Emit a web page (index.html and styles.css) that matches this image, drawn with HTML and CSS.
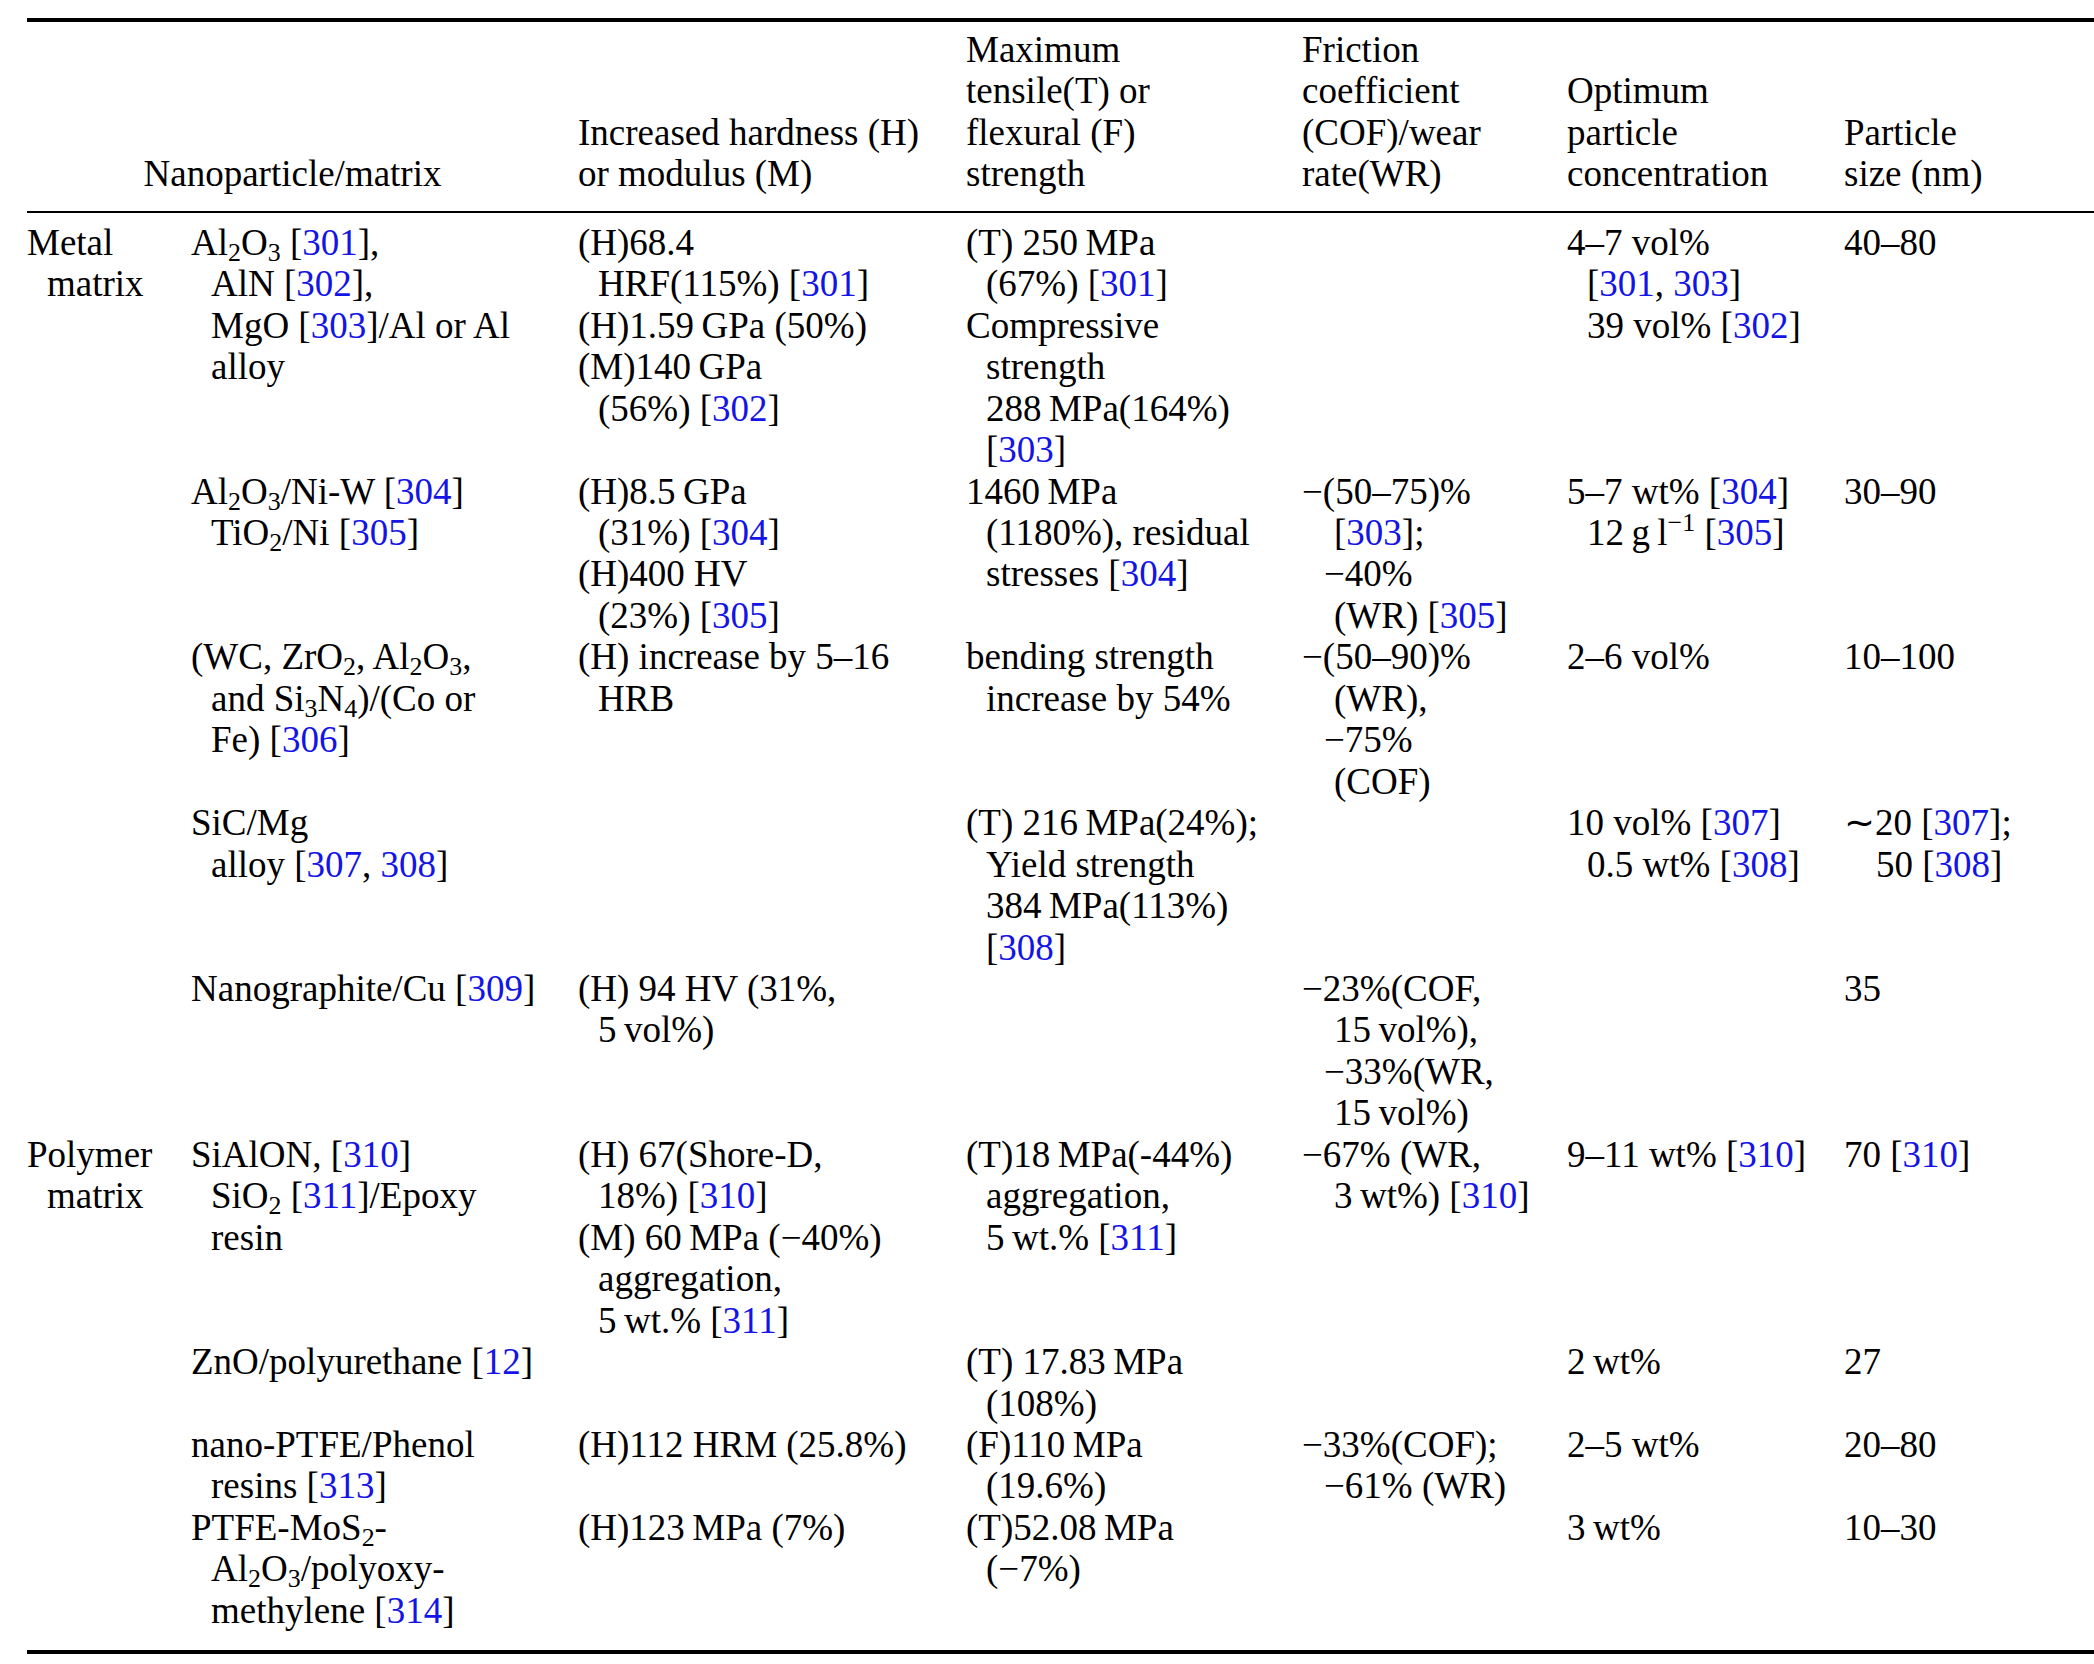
FILE: index.html
```html
<!DOCTYPE html>
<html lang="en">
<head>
<meta charset="utf-8">
<title>Nanoparticle reinforced composites</title>
<link rel="stylesheet" href="styles.css">
</head>
<body>
<table class="tbl">
  <colgroup>
    <col class="c1"><col class="c2"><col class="c3"><col class="c4"><col class="c5"><col class="c6"><col class="c7">
  </colgroup>
  <thead>
    <tr>
      <th colspan="2" class="span">Nanoparticle/matrix</th>
      <th>Increased hardness (H)<br>or modulus (M)</th>
      <th>Maximum<br>tensile(T) or<br>flexural (F)<br>strength</th>
      <th>Friction<br>coefficient<br>(COF)/wear<br>rate(WR)</th>
      <th>Optimum<br>particle<br>concentration</th>
      <th>Particle<br>size (nm)</th>
    </tr>
  </thead>
  <tbody>
    <tr>
      <td><div class="p">Metal<br>matrix</div></td>
      <td><div class="p">Al<span class="sb">2</span>O<span class="sb">3</span> [<a>301</a>],<br>AlN [<a>302</a>],<br>MgO [<a>303</a>]/Al or Al<br>alloy</div></td>
      <td><div class="p">(H)68.4<br>HRF(115%) [<a>301</a>]</div><div class="p">(H)1.59&thinsp;GPa (50%)</div><div class="p">(M)140&thinsp;GPa<br>(56%) [<a>302</a>]</div></td>
      <td><div class="p">(T) 250&thinsp;MPa<br>(67%) [<a>301</a>]</div><div class="p">Compressive<br>strength<br>288&thinsp;MPa(164%)<br>[<a>303</a>]</div></td>
      <td class="fr"></td>
      <td><div class="p">4–7 vol%<br>[<a>301</a>, <a>303</a>]<br>39 vol% [<a>302</a>]</div></td>
      <td class="ps"><div class="p">40–80</div></td>
    </tr>
    <tr>
      <td></td>
      <td><div class="p">Al<span class="sb">2</span>O<span class="sb">3</span>/Ni-W [<a>304</a>]<br>TiO<span class="sb">2</span>/Ni [<a>305</a>]</div></td>
      <td><div class="p">(H)8.5&thinsp;GPa<br>(31%) [<a>304</a>]</div><div class="p">(H)400 HV<br>(23%) [<a>305</a>]</div></td>
      <td><div class="p">1460&thinsp;MPa<br>(1180%), residual<br>stresses [<a>304</a>]</div></td>
      <td class="fr"><div class="p">−(50–75)%<br>[<a>303</a>];<br><span class="neg">−40%</span><br>(WR) [<a>305</a>]</div></td>
      <td><div class="p">5–7 wt% [<a>304</a>]<br>12&thinsp;g&thinsp;l<span class="sp">−1</span> [<a>305</a>]</div></td>
      <td class="ps"><div class="p">30–90</div></td>
    </tr>
    <tr>
      <td></td>
      <td><div class="p">(WC, ZrO<span class="sb">2</span>, Al<span class="sb">2</span>O<span class="sb">3</span>,<br>and Si<span class="sb">3</span>N<span class="sb">4</span>)/(Co or<br>Fe) [<a>306</a>]</div></td>
      <td><div class="p">(H) increase by 5–16<br>HRB</div></td>
      <td><div class="p">bending strength<br>increase by 54%</div></td>
      <td class="fr"><div class="p">−(50–90)%<br>(WR),<br><span class="neg">−75%</span><br>(COF)</div></td>
      <td><div class="p">2–6 vol%</div></td>
      <td class="ps"><div class="p">10–100</div></td>
    </tr>
    <tr>
      <td></td>
      <td><div class="p">SiC/Mg<br>alloy [<a>307</a>, <a>308</a>]</div></td>
      <td></td>
      <td><div class="p">(T) 216&thinsp;MPa(24%);<br>Yield strength<br>384&thinsp;MPa(113%)<br>[<a>308</a>]</div></td>
      <td class="fr"></td>
      <td><div class="p">10 vol% [<a>307</a>]<br>0.5 wt% [<a>308</a>]</div></td>
      <td class="ps"><div class="p">∼20 [<a>307</a>];<br>50 [<a>308</a>]</div></td>
    </tr>
    <tr>
      <td></td>
      <td><div class="p">Nanographite/Cu [<a>309</a>]</div></td>
      <td><div class="p">(H) 94 HV (31%,<br>5&thinsp;vol%)</div></td>
      <td></td>
      <td class="fr"><div class="p">−23%(COF,<br>15&thinsp;vol%),<br><span class="neg">−33%(WR,</span><br>15&thinsp;vol%)</div></td>
      <td></td>
      <td class="ps"><div class="p">35</div></td>
    </tr>
    <tr>
      <td><div class="p">Polymer<br>matrix</div></td>
      <td><div class="p">SiAlON, [<a>310</a>]<br>SiO<span class="sb">2</span> [<a>311</a>]/Epoxy<br>resin</div></td>
      <td><div class="p">(H) 67(Shore-D,<br>18%) [<a>310</a>]</div><div class="p">(M) 60&thinsp;MPa (−40%)<br>aggregation,<br>5&thinsp;wt.% [<a>311</a>]</div></td>
      <td><div class="p">(T)18&thinsp;MPa(-44%)<br>aggregation,<br>5&thinsp;wt.% [<a>311</a>]</div></td>
      <td class="fr"><div class="p">−67% (WR,<br>3&thinsp;wt%) [<a>310</a>]</div></td>
      <td><div class="p">9–11 wt% [<a>310</a>]</div></td>
      <td class="ps"><div class="p">70 [<a>310</a>]</div></td>
    </tr>
    <tr>
      <td></td>
      <td><div class="p">ZnO/polyurethane [<a>12</a>]</div></td>
      <td></td>
      <td><div class="p">(T) 17.83&thinsp;MPa<br>(108%)</div></td>
      <td class="fr"></td>
      <td><div class="p">2&thinsp;wt%</div></td>
      <td class="ps"><div class="p">27</div></td>
    </tr>
    <tr>
      <td></td>
      <td><div class="p">nano-PTFE/Phenol<br>resins [<a>313</a>]</div></td>
      <td><div class="p">(H)112 HRM (25.8%)</div></td>
      <td><div class="p">(F)110&thinsp;MPa<br>(19.6%)</div></td>
      <td class="fr"><div class="p">−33%(COF);<br><span class="neg">−61% (WR)</span></div></td>
      <td><div class="p">2–5 wt%</div></td>
      <td class="ps"><div class="p">20–80</div></td>
    </tr>
    <tr>
      <td></td>
      <td><div class="p">PTFE-MoS<span class="sb">2</span>-<br>Al<span class="sb">2</span>O<span class="sb">3</span>/polyoxy-<br>methylene [<a>314</a>]</div></td>
      <td><div class="p">(H)123&thinsp;MPa (7%)</div></td>
      <td><div class="p">(T)52.08&thinsp;MPa<br>(−7%)</div></td>
      <td class="fr"></td>
      <td><div class="p">3&thinsp;wt%</div></td>
      <td class="ps"><div class="p">10–30</div></td>
    </tr>
  </tbody>
</table>
</body>
</html>
```
FILE: styles.css
```css
html, body {
  margin: 0;
  padding: 0;
  background: #ffffff;
  overflow: hidden;
}

body {
  font-family: "Liberation Serif", "Times New Roman", serif;
  font-size: 37px;
  line-height: 41.45px;
  color: #000000;
}

.tbl {
  margin: 18px 0 0 27px;
  width: 2067px;
  table-layout: fixed;
  border-collapse: separate;
  border-spacing: 0;
}

.c1 { width: 164px; }
.c2 { width: 387px; }
.c3 { width: 388px; }
.c4 { width: 336px; }
.c5 { width: 265px; }
.c6 { width: 277px; }
.c7 { width: 250px; }

.tbl th {
  font-weight: normal;
  text-align: left;
  vertical-align: bottom;
  white-space: nowrap;
  padding: 7px 0 16px 0;
  border-top: 4px solid #000;
  border-bottom: 2px solid #000;
}

.tbl th.span {
  text-align: center;
  padding-right: 20px;
}

.tbl td {
  vertical-align: top;
  white-space: nowrap;
  padding: 0;
}

.tbl tbody tr:first-child td {
  padding-top: 9px;
}

.tbl tbody tr:last-child td {
  padding-bottom: 19px;
  border-bottom: 4px solid #000;
}

.p {
  padding-left: 20px;
  text-indent: -20px;
}

.fr .p {
  padding-left: 32px;
  text-indent: -32px;
}

.ps .p {
  padding-left: 32px;
  text-indent: -32px;
}

.neg {
  margin-left: -10px;
}

.tbl a {
  color: #1414e6;
  text-decoration: none;
}

.sb {
  font-size: 0.7em;
  line-height: 0;
  vertical-align: -0.25em;
}

.sp {
  font-size: 0.7em;
  line-height: 0;
  vertical-align: 0.55em;
}
```
